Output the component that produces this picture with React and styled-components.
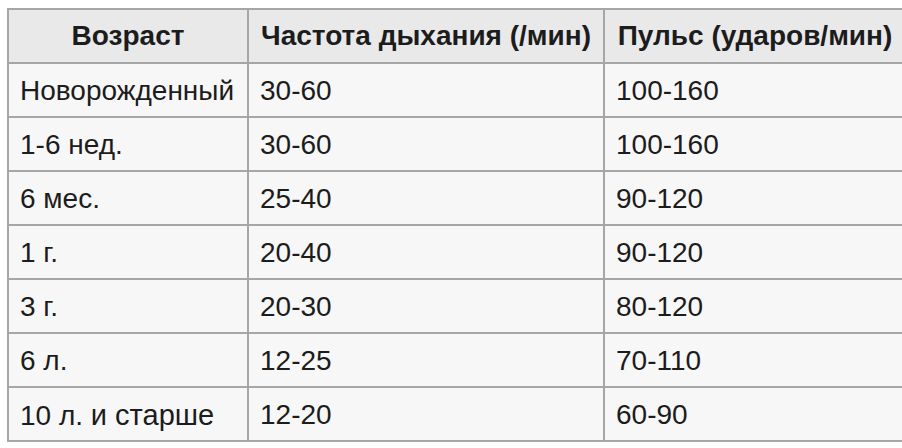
import React from "react";
import styled, { createGlobalStyle } from "styled-components";

const GlobalStyle = createGlobalStyle`
  html, body {
    margin: 0;
    padding: 0;
    background: #ffffff;
    overflow: hidden;
  }
  body {
    font-family: "Liberation Sans", Arial, sans-serif;
  }
`;

const Page = styled.div`
  width: 902px;
  height: 448px;
  padding: 8px 0 0 7px;
  box-sizing: border-box;
  overflow: hidden;
`;

const Table = styled.table`
  border-collapse: collapse;
  width: 898px;
  table-layout: fixed;
  background: #f7f7f7;
  color: #1c1c1c;
  font-size: 28px;
`;

const HeadCell = styled.th`
  background: #e9e9ea;
  border: 2px solid #a6a6a6;
  height: 54px;
  padding: 0 10px;
  font-weight: bold;
  text-align: center;
  white-space: nowrap;
  box-sizing: border-box;
`;

const Cell = styled.td`
  border: 2px solid #a6a6a6;
  height: 54px;
  padding: 2px 11px 0;
  text-align: left;
  white-space: nowrap;
  box-sizing: border-box;
`;

const Tail = styled.span`
  font-size: ${(p) => p.size || 28}px;
`;

const rows = [
  ["Новорожденный", "30-60", "100-160"],
  ["1-6 нед.", "30-60", "100-160"],
  ["6 мес.", "25-40", "90-120"],
  ["1 г.", "20-40", "90-120"],
  ["3 г.", "20-30", "80-120"],
  ["6 л.", "12-25", "70-110"],
  [
    <>
      10 л. <Tail size={29}>и старше</Tail>
    </>,
    "12-20",
    "60-90",
  ],
];

export default function App() {
  return (
    <>
      <GlobalStyle />
      <Page>
        <Table>
          <colgroup>
            <col style={{ width: 240 }} />
            <col style={{ width: 356 }} />
            <col style={{ width: 302 }} />
          </colgroup>
          <thead>
            <tr>
              <HeadCell>Возраст</HeadCell>
              <HeadCell>Частота дыхания (/мин)</HeadCell>
              <HeadCell>Пульс (ударов/мин)</HeadCell>
            </tr>
          </thead>
          <tbody>
            {rows.map((r, i) => (
              <tr key={i}>
                {r.map((c, j) => (
                  <Cell key={j}>{c}</Cell>
                ))}
              </tr>
            ))}
          </tbody>
        </Table>
      </Page>
    </>
  );
}
